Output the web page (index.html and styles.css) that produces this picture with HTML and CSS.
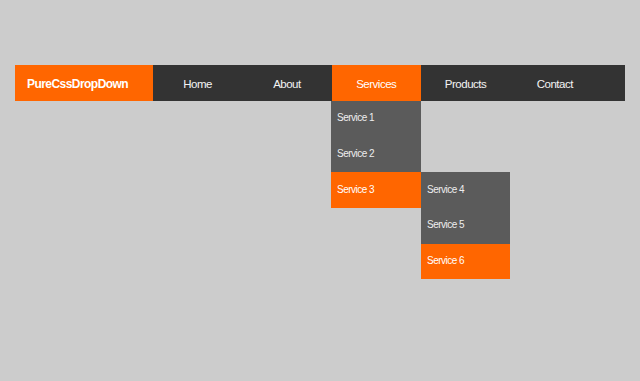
FILE: index.html
```html
<!DOCTYPE html>
<html>
<head>
<meta charset="utf-8">
<link rel="stylesheet" href="styles.css">
</head>
<body>
<nav class="navbar">
  <a class="brand" href="#">PureCssDropDown</a>
  <div class="menu">
    <a class="link" href="#">Home</a>
    <a class="link" href="#">About</a>
    <a class="link active" href="#">Services</a>
    <a class="link" href="#">Products</a>
    <a class="link" href="#">Contact</a>
  </div>
</nav>
<div class="menus">
  <div class="col">
    <a class="sublink" href="#">Service 1</a>
    <a class="sublink" href="#">Service 2</a>
    <a class="sublink active" href="#">Service 3</a>
  </div>
  <div class="col side">
    <a class="sublink" href="#">Service 4</a>
    <a class="sublink" href="#">Service 5</a>
    <a class="sublink active" href="#">Service 6</a>
  </div>
</div>
</body>
</html>
```

FILE: styles.css
```css
html, body {
  margin: 0;
  padding: 0;
  background: #cccccc;
  font-family: "Liberation Sans", Arial, sans-serif;
}
body {
  padding: 65px 15px 0 15px;
}
a {
  text-decoration: none;
  color: #f4f4f4;
}
.navbar {
  display: flex;
  width: 610px;
  height: 36px;
  background: #333333;
}
.brand {
  display: flex;
  align-items: center;
  width: 126px;
  padding-left: 12px;
  padding-top: 1px;
  box-sizing: content-box;
  background: #ff6600;
  color: #ffffff;
  font-weight: bold;
  font-size: 12px;
  letter-spacing: -0.55px;
}
.menu {
  display: flex;
}
.link {
  display: flex;
  align-items: center;
  justify-content: center;
  width: 89.3px;
  height: 36px;
  padding-top: 1px;
  box-sizing: border-box;
  font-size: 11.5px;
  letter-spacing: -0.5px;
}
.link.active {
  background: #ff6600;
  color: #ffffff;
}
.menus {
  display: flex;
  margin-left: 316px;
}
.col {
  display: flex;
  flex-direction: column;
  width: 90px;
}
.col.side {
  width: 89px;
  margin-top: 71.4px;
}
.sublink {
  display: flex;
  align-items: center;
  height: 35.7px;
  padding-left: 6px;
  padding-bottom: 2px;
  box-sizing: border-box;
  font-size: 10px;
  letter-spacing: -0.5px;
  color: #eeeeee;
  background: #5b5b5b;
}
.sublink.active {
  background: #ff6600;
  color: #ffffff;
}
```
